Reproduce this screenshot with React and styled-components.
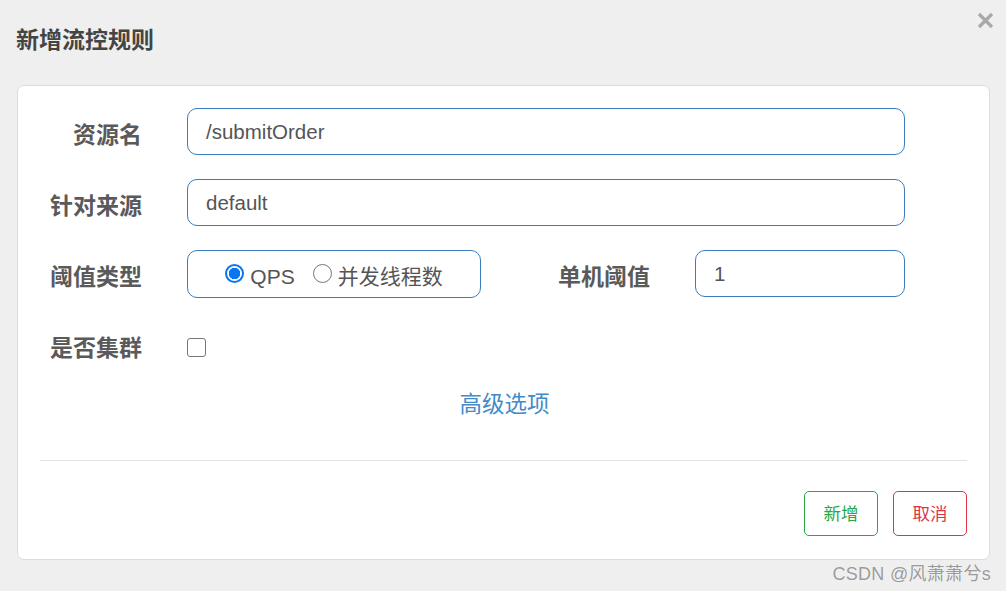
import React from "react";
import styled, { createGlobalStyle } from "styled-components";

const Global = createGlobalStyle`
  html, body { margin: 0; padding: 0; }
  body {
    background: #efefef;
    font-family: "Liberation Sans", "Noto Sans CJK SC", sans-serif;
    color: #555;
  }
  * { box-sizing: border-box; }
`;

const Modal = styled.div`
  position: relative;
  width: 1006px;
  height: 591px;
  background: #efefef;
`;

const Header = styled.div`
  height: 85px;
  display: flex;
  align-items: flex-start;
  justify-content: space-between;
  padding: 23px 11px 0 16px;
`;

const Title = styled.h3`
  margin: 0;
  font-family: "Noto Sans CJK SC", sans-serif;
  font-size: 23px;
  line-height: 30px;
  font-weight: 700;
  color: #444;
`;

const Close = styled.button`
  border: 0;
  background: none;
  padding: 0;
  margin-top: -12px;
  width: 19px;
  height: 19px;
  display: flex;
  cursor: pointer;
`;

const Card = styled.div`
  margin: 0 16px 0 17px;
  height: 475px;
  background: #fff;
  border: 1px solid #dcdcdc;
  border-radius: 7px;
  padding: 22px;
  display: flex;
  flex-direction: column;
`;

const Form = styled.div`
  display: flex;
  flex-direction: column;
  gap: 24px;
`;

const Row = styled.div`
  display: flex;
  align-items: center;
  height: 47px;
`;

const Label = styled.label`
  flex: 0 0 ${(p) => p.$w || 102}px;
  text-align: right;
  font-family: "Noto Sans CJK SC", sans-serif;
  font-size: 23px;
  font-weight: 700;
  color: #5a5a5a;
  margin-right: ${(p) => p.$gap || 45}px;
  line-height: 30px;
  padding-top: 3px;
`;

const Input = styled.div`
  width: ${(p) => p.$w}px;
  height: 47px;
  border: 1px solid #3a7dbf;
  border-radius: 10px;
  padding: 0 18px;
  display: flex;
  align-items: center;
  font-family: "Liberation Sans", "Noto Sans CJK SC", sans-serif;
  font-size: 20.5px;
  color: #555;
`;

const RadioGroup = styled.div`
  width: 294px;
  height: 48px;
  border: 1px solid #3a7dbf;
  border-radius: 10px;
  display: flex;
  align-items: center;
  justify-content: center;
  font-size: 21px;
  color: #555;
`;

const RadioItem = styled.span`
  display: inline-flex;
  align-items: center;
  gap: 6px;
  margin-right: ${(p) => (p.$last ? 0 : 18)}px;
  font-family: "Liberation Sans", "Noto Sans CJK SC", sans-serif;
  line-height: 24px;
  padding-top: 7px;
`;

const RadioDot = styled.span`
  width: 19px;
  height: 19px;
  border-radius: 50%;
  margin-top: -7px;
  flex: none;
  border: ${(p) => (p.$on ? "2px solid #0a75f0" : "1.5px solid #767676")};
  background: ${(p) =>
    p.$on ? "radial-gradient(circle, #0a75f0 0 5.5px, #fff 6px)" : "#fff"};
`;

const Checkbox = styled.span`
  width: 19px;
  height: 19px;
  border: 1.5px solid #767676;
  border-radius: 3px;
  margin-top: 6px;
  background: #fff;
`;

const Advanced = styled.a`
  align-self: center;
  margin-top: 19px;
  margin-left: 2px;
  font-family: "Noto Sans CJK SC", sans-serif;
  font-size: 22.5px;
  line-height: 30px;
  color: #428bca;
  text-decoration: none;
  cursor: pointer;
`;

const Divider = styled.hr`
  margin: 43px 0 0 0;
  border: 0;
  border-top: 1px solid #e3e3e3;
`;

const Footer = styled.div`
  display: flex;
  justify-content: flex-end;
  gap: 15px;
  margin-top: 30px;
`;

const Button = styled.button`
  width: 74px;
  height: 45px;
  background: #fff;
  border: 1px solid ${(p) => p.$color};
  color: ${(p) => p.$color};
  border-radius: 5px;
  font-family: "Noto Sans CJK SC", sans-serif;
  font-size: 17.5px;
  padding: 0 0 2px;
  cursor: pointer;
`;

const Watermark = styled.div`
  position: absolute;
  right: 15px;
  bottom: 6px;
  font-family: "Liberation Sans", "Noto Sans CJK SC", sans-serif;
  font-size: 18px;
  color: #9a9a9a;
  text-shadow: 0 0 1px #fff;
  letter-spacing: 0.3px;
`;

export default function App() {
  return (
    <>
      <Global />
      <Modal>
        <Header>
          <Title>新增流控规则</Title>
          <Close aria-label="close">
            <svg width="19" height="19" viewBox="0 0 19 19">
              <path
                d="M3 3 L16 16 M16 3 L3 16"
                stroke="#a9a9a9"
                strokeWidth="3.2"
                strokeLinecap="butt"
              />
            </svg>
          </Close>
        </Header>
        <Card>
          <Form>
            <Row>
              <Label>资源名</Label>
              <Input $w={718}>/submitOrder</Input>
            </Row>
            <Row>
              <Label>针对来源</Label>
              <Input $w={718}>default</Input>
            </Row>
            <Row>
              <Label>阈值类型</Label>
              <RadioGroup>
                <RadioItem>
                  <RadioDot $on />
                  QPS
                </RadioItem>
                <RadioItem $last>
                  <RadioDot />
                  并发线程数
                </RadioItem>
              </RadioGroup>
              <Label $w={169} $gap={45}>单机阈值</Label>
              <Input $w={210}>1</Input>
            </Row>
            <Row>
              <Label>是否集群</Label>
              <Checkbox />
            </Row>
          </Form>
          <Advanced>高级选项</Advanced>
          <Divider />
          <Footer>
            <Button $color="#28a745">新增</Button>
            <Button $color="#dc3545">取消</Button>
          </Footer>
        </Card>
        <Watermark>CSDN @风萧萧兮s</Watermark>
      </Modal>
    </>
  );
}
